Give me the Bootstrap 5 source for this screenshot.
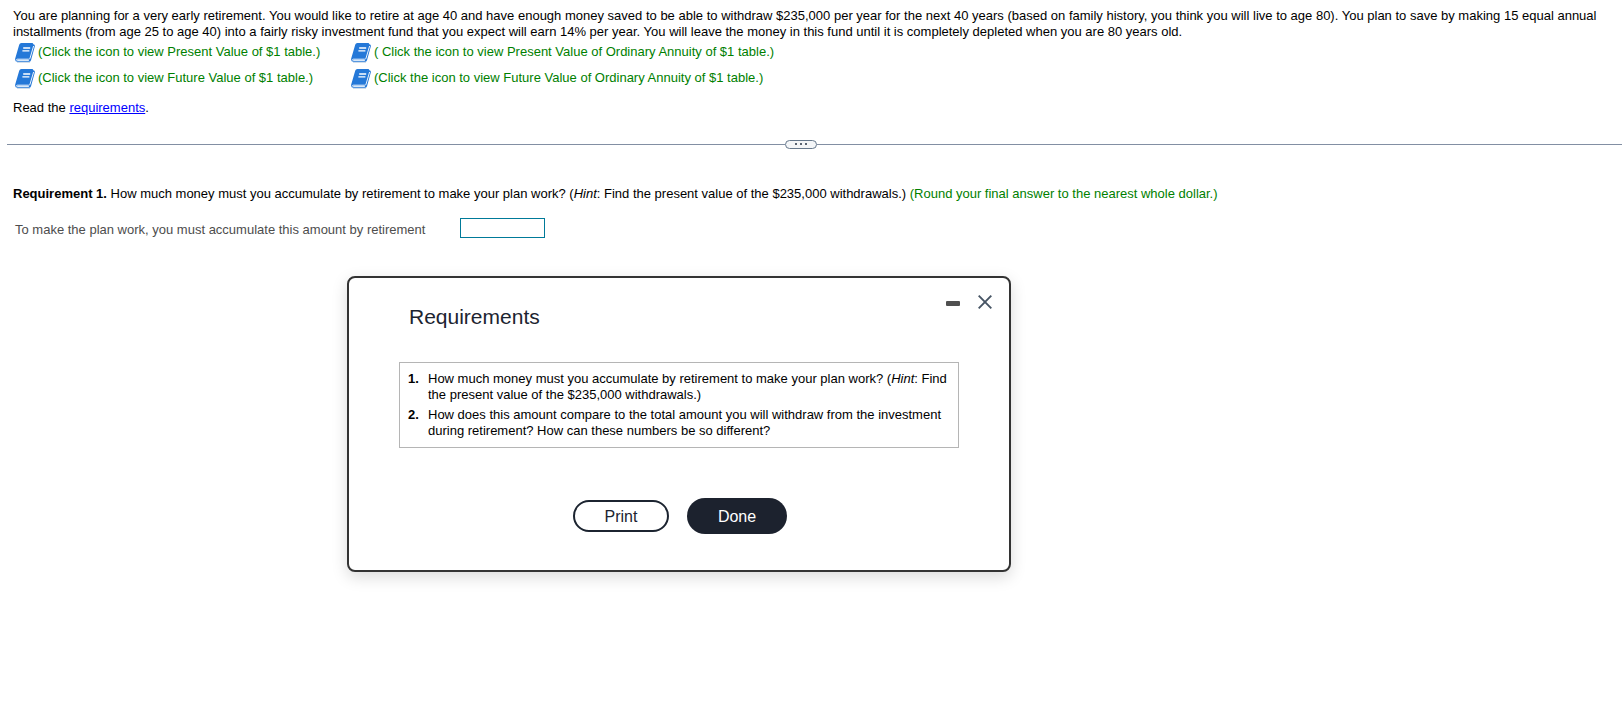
<!DOCTYPE html>
<html lang="en">
<head>
  <meta charset="UTF-8" />
  <meta name="viewport" content="width=device-width, initial-scale=1.0"/>
  <title>Retirement Planning Exercise</title>
  <link href="https://cdn.jsdelivr.net/npm/bootstrap@5.3.0/dist/css/bootstrap.min.css" rel="stylesheet"/>
  <style>
    body { font-family: "Liberation Sans", Arial, sans-serif; font-size: 13px; line-height: 16px; color: #000; overflow: hidden; }
    .page { height: 722px; }
    .problem { padding: 8px 0 0 13px; }
    .line { display: block; white-space: nowrap; }
    .first-line { letter-spacing: .003px; }
    .tables { display: grid; grid-template-columns: 336px 1fr; grid-auto-rows: 26px; padding: 2px 0 0 2px; }
    .tables svg { flex: none; margin: 1px 3px 0 0; }
    .hint-green { color: #008000; }
    .tables .hint-green { padding-top: 2px; }
    .read { margin-top: 6px; }
    .read a { color: #00f; }
    .divider { margin: 23px 0 0 7px; height: 10px; }
    .divider .rule { height: 1px; background: #828fa3; }
    .divider .rule-left { width: 778px; }
    .pill { width: 32px; height: 9px; border: 1px solid #66788c; border-radius: 5px; background: #f4f6f8; gap: 3px; }
    .pill i { width: 2px; height: 2px; background: #5a6472; }
    .question { margin: 37px 0 0 13px; }
    .answer { margin: 16px 0 0 15px; color: #4d4d4d; }
    .answer-label { width: 445px; padding-top: 4px; }
    .answer input { width: 85px; height: 20px; border: 1px solid #007a99; padding: 0 3px; }
    .dialog-box { width: 664px; height: 296px; margin: 38px 0 0 347px; border: 2px solid #333; border-radius: 8px; box-shadow: 0 5px 16px rgba(0,0,0,.15); background: #fff; }
    .dialog-top { height: 84px; padding: 17px 17px 0 60px; }
    .dialog-top h1 { font-size: 21px; line-height: 24px; margin: 10px 0 0; color: #1c2430; font-weight: 400; }
    .tool-icons { gap: 18px; height: 14px; }
    .min-bar { width: 14px; height: 5px; margin-top: 6px; border-radius: 1px; background: #505050; }
    .req-list { width: 560px; height: 86px; margin-left: 50px; padding: 8px 0 0 8px; border: 1px solid #b5b5b5; }
    .req-item { margin-bottom: 4px; }
    .req-item b { width: 20px; }
    .actions { margin: 50px 0 0 224px; gap: 18px; }
    .pill-btn { font-size: 16px; line-height: 18px; padding: 1px 0 0; border-radius: 18px; color: #1c2430; }
    .btn-print { width: 96px; height: 32px; border: 2px solid #1c2430; }
    .btn-done, .btn-done:hover { width: 100px; height: 36px; background: #1c222e; color: #fff; border: 0; }
  </style>
</head>
<body>
  <svg class="d-none">
    <symbol id="book" viewBox="0 0 20 20">
      <path d="M2 19.300h13" stroke="#c3d5e6" stroke-width="1"/>
      <path d="M6.400 0H17q1.400 0 1.300 1.300Q20.200 1.700 19.800 3.400L16 17.200q-.5 1.600-2 1.600H2.500Q-.4 18.800.2 15.600L4.200 1.800Q4.700 0 6.400 0z" fill="#2478d8"/>
      <path d="M18.600 3L15 15.300q-.3.900-1.300.9H2.300q-.8 0-.8.6t.8.600h11.600" fill="none" stroke="#eef5fd" stroke-width="1"/>
      <path d="M8.200 5h7M7.400 7.900h7" stroke="#fff" stroke-width="1.300"/>
    </symbol>
  </svg>

  <div class="page">
    <div class="problem">
      <span class="line first-line">You are planning for a very early retirement. You would like to retire at age 40 and have enough money saved to be able to withdraw $235,000 per year for the next 40 years (based on family history, you think you will live to age 80). You plan to save by making 15 equal annual</span>
      <span class="line">installments (from age 25 to age 40) into a fairly risky investment fund that you expect will earn 14% per year. You will leave the money in this fund until it is completely depleted when you are 80 years old.</span>
      <div class="tables">
        <div class="d-flex"><svg width="20" height="20"><use href="#book"/></svg><span class="hint-green">(Click the icon to view Present Value of $1 table.)</span></div>
        <div class="d-flex"><svg width="20" height="20"><use href="#book"/></svg><span class="hint-green">( Click the icon to view Present Value of Ordinary Annuity of $1 table.)</span></div>
        <div class="d-flex"><svg width="20" height="20"><use href="#book"/></svg><span class="hint-green">(Click the icon to view Future Value of $1 table.)</span></div>
        <div class="d-flex"><svg width="20" height="20"><use href="#book"/></svg><span class="hint-green">(Click the icon to view Future Value of Ordinary Annuity of $1 table.)</span></div>
      </div>
      <div class="read">Read the <a href="#requirements">requirements</a>.</div>
    </div>

    <div class="divider d-flex align-items-center">
      <div class="rule rule-left"></div>
      <div class="pill d-flex align-items-center justify-content-center"><i></i><i></i><i></i></div>
      <div class="rule flex-fill"></div>
    </div>

    <div class="question line"><b>Requirement 1.</b> How much money must you accumulate by retirement to make your plan work? (<i>Hint</i>: Find the present value of the $235,000 withdrawals.) <span class="hint-green">(Round your final answer to the nearest whole dollar.)</span></div>

    <div class="answer d-flex">
      <label class="answer-label" for="amount">To make the plan work, you must accumulate this amount by retirement</label>
      <input type="text" id="amount"/>
    </div>

    <div class="dialog-box" id="requirements">
      <div class="dialog-top d-flex justify-content-between">
        <h1>Requirements</h1>
        <div class="tool-icons d-flex">
          <span class="min-bar"></span>
          <svg width="14" height="14" viewBox="0 0 14 14"><path d="M.7.700l12.600 12.600M13.300.700L.7 13.300" stroke="#465464" stroke-width="1.900"/></svg>
        </div>
      </div>
      <div class="req-list">
        <div class="req-item d-flex"><b>1.</b><div><span class="line">How much money must you accumulate by retirement to make your plan work? (<i>Hint</i>: Find</span><span class="line">the present value of the $235,000 withdrawals.)</span></div></div>
        <div class="req-item d-flex"><b>2.</b><div><span class="line">How does this amount compare to the total amount you will withdraw from the investment</span><span class="line">during retirement? How can these numbers be so different?</span></div></div>
      </div>
      <div class="actions d-flex align-items-center">
        <button class="btn pill-btn btn-print">Print</button>
        <button class="btn pill-btn btn-done">Done</button>
      </div>
    </div>
  </div>
  <script src="https://cdn.jsdelivr.net/npm/bootstrap@5.3.0/dist/js/bootstrap.bundle.min.js"></script>
</body>
</html>
